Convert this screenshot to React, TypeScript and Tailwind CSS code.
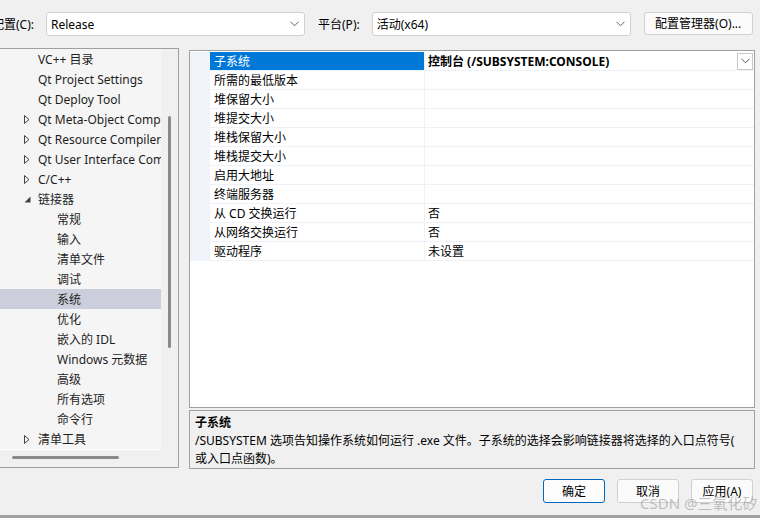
import React from "react";

const F = "font-['Noto_Sans','Noto_Sans_CJK_SC',sans-serif]";

function Chevron({ className = "" }: { className?: string }) {
  return (
    <svg width="9" height="6" viewBox="0 0 9 6" className={className}>
      <path d="M0.5 0.8 L4.5 4.8 L8.5 0.8" fill="none" stroke="#606060" strokeWidth="1" />
    </svg>
  );
}

function Combo({ text, w }: { text: string; w: string }) {
  return (
    <div className={`${w} h-[24px] bg-white border border-[#d0d0d0] rounded-[3px] flex items-center justify-between pl-[4px] pr-[5px]`}>
      <span className="text-[12px] text-black pt-[1px]">{text}</span>
      <Chevron />
    </div>
  );
}

type Tree = { label: string; level: 1 | 2; arrow?: "closed" | "open"; selected?: boolean };

const tree: Tree[] = [
  { label: "VC++ 目录", level: 1 },
  { label: "Qt Project Settings", level: 1 },
  { label: "Qt Deploy Tool", level: 1 },
  { label: "Qt Meta-Object Compiler", level: 1, arrow: "closed" },
  { label: "Qt Resource Compiler", level: 1, arrow: "closed" },
  { label: "Qt User Interface Compiler", level: 1, arrow: "closed" },
  { label: "C/C++", level: 1, arrow: "closed" },
  { label: "链接器", level: 1, arrow: "open" },
  { label: "常规", level: 2 },
  { label: "输入", level: 2 },
  { label: "清单文件", level: 2 },
  { label: "调试", level: 2 },
  { label: "系统", level: 2, selected: true },
  { label: "优化", level: 2 },
  { label: "嵌入的 IDL", level: 2 },
  { label: "Windows 元数据", level: 2 },
  { label: "高级", level: 2 },
  { label: "所有选项", level: 2 },
  { label: "命令行", level: 2 },
  { label: "清单工具", level: 1, arrow: "closed" },
];

function Arrow({ kind }: { kind: "closed" | "open" }) {
  if (kind === "closed")
    return (
      <svg width="6" height="9" viewBox="0 0 6 9" className="shrink-0">
        <path d="M0.5 0.5 L5 4.5 L0.5 8.5 Z" fill="none" stroke="#404040" strokeWidth="1" />
      </svg>
    );
  return (
    <svg width="7" height="7" viewBox="0 0 7 7" className="shrink-0">
      <path d="M6.5 0.5 L6.5 6.5 L0.5 6.5 Z" fill="#404040" />
    </svg>
  );
}

const props: { name: string; value: string; selected?: boolean }[] = [
  { name: "子系统", value: "控制台 (/SUBSYSTEM:CONSOLE)", selected: true },
  { name: "所需的最低版本", value: "" },
  { name: "堆保留大小", value: "" },
  { name: "堆提交大小", value: "" },
  { name: "堆栈保留大小", value: "" },
  { name: "堆栈提交大小", value: "" },
  { name: "启用大地址", value: "" },
  { name: "终端服务器", value: "" },
  { name: "从 CD 交换运行", value: "否" },
  { name: "从网络交换运行", value: "否" },
  { name: "驱动程序", value: "未设置" },
];

function Btn({ label, primary }: { label: string; primary?: boolean }) {
  return (
    <div
      className={`w-[62px] h-[24px] rounded-[3px] flex items-center justify-center text-[12px] text-black pt-[1px] ${
        primary ? "border border-[#0067c0] bg-[#fdfdfd]" : "border border-[#d0d0d0] bg-[#fbfbfb]"
      }`}
    >
      {label}
    </div>
  );
}

export default function App() {
  return (
    <div className={`${F} relative w-[760px] h-[518px] bg-[#f0f0f0] overflow-hidden flex flex-col text-black`}>
      {/* top bar */}
      <div className="h-[48px] flex items-start pt-[12px]">
        <span className="ml-[-8px] h-[24px] pt-[1px] flex items-center text-[12px] whitespace-nowrap">配置(C):</span>
        <div className="ml-[12px]">
          <Combo text="Release" w="w-[259px]" />
        </div>
        <span className="ml-[13px] h-[24px] pt-[1px] flex items-center text-[12px] whitespace-nowrap">平台(P):</span>
        <div className="ml-[12px]">
          <Combo text="活动(x64)" w="w-[259px]" />
        </div>
        <div className="ml-[13px] w-[109px] h-[23px] pt-[1px] bg-[#fbfbfb] border border-[#d0d0d0] rounded-[3px] flex items-center justify-center text-[12px] whitespace-nowrap">
          配置管理器(O)...
        </div>
      </div>

      {/* main */}
      <div className="flex items-start">
        {/* left tree panel */}
        <div className="w-[179px] h-[420px] border-t border-r border-b border-[#a0a0a0] flex flex-col">
          <div className="flex h-[401px]">
            <div className="w-[161px] bg-[#f5f5f5] overflow-hidden border-b border-white">
              {tree.map((t, i) => (
                <div
                  key={i}
                  className={`h-[20px] pt-[1px] flex items-center whitespace-nowrap text-[12px] ${
                    t.selected ? "bg-[#cccedb]" : ""
                  } ${t.level === 2 ? "pl-[57px]" : t.arrow ? "pl-[24px]" : "pl-[38px]"}`}
                >
                  {t.level === 1 && t.arrow && (
                    <span className="w-[14px] shrink-0 flex items-center">
                      <Arrow kind={t.arrow} />
                    </span>
                  )}
                  <span className="text-[#1e1e1e]">{t.label}</span>
                </div>
              ))}
            </div>
            <div className="flex-1 relative">
              <div className="absolute left-[7px] top-[67px] w-[3px] h-[232px] bg-[#8a8a8a] rounded-full" />
            </div>
          </div>
          <div className="flex-1 relative">
            <div className="absolute left-[12px] top-[6px] w-[107px] h-[3px] bg-[#8a8a8a] rounded-full" />
          </div>
        </div>

        {/* right column */}
        <div className="ml-[10px] mt-[2px] w-[566px] flex flex-col">
          <div className="h-[358px] bg-white border border-[#a0a0a0] flex flex-col">
            <div className="flex pt-[1px]">
              <div className="w-[20px] bg-[#f0f4fa]" />
              <div className="flex-1">
                {props.map((p, i) => (
                  <div key={i} className="h-[19px] flex border-b border-[#eef1f6] text-[12px]">
                    <div
                      className={`w-[215px] pl-[4px] pt-[1px] flex items-center border-r border-[#eef1f6] ${
                        p.selected ? "bg-[#0078d7] text-white" : ""
                      }`}
                    >
                      {p.name}
                    </div>
                    <div className="flex-1 flex items-center justify-between pl-[3px] pr-[1px]">
                      <span className={`pt-[1px] ${p.selected ? "font-bold" : ""}`}>{p.value}</span>
                      {p.selected && (
                        <div className="w-[16px] h-[17px] border border-[#c8c8c8] bg-white flex items-center justify-center">
                          <Chevron />
                        </div>
                      )}
                    </div>
                  </div>
                ))}
              </div>
            </div>
          </div>
          <div className="mt-[2px] h-[59px] border border-[#a0a0a0] bg-[#f0f0f0] px-[5px] pt-[3px] text-[12px] leading-[18px]">
            <div className="font-bold">子系统</div>
            <div className="whitespace-nowrap">
              /SUBSYSTEM 选项告知操作系统如何运行 .exe 文件。子系统的选择会影响链接器将选择的入口点符号(
            </div>
            <div>或入口点函数)。</div>
          </div>
        </div>
      </div>

      {/* buttons */}
      <div className="flex justify-end gap-[12px] pr-[7px] mt-[10px]">
        <Btn label="确定" primary />
        <Btn label="取消" />
        <Btn label="应用(A)" />
      </div>

      <div className="mt-auto h-[3px] bg-[#a0a0a0]" />

      {/* watermark */}
      <div className="absolute z-10 left-[640px] top-[494px] text-[15px] leading-[18px] text-[#9a9a9a]/60 whitespace-nowrap pointer-events-none">
        CSDN @三氧化矽
      </div>
    </div>
  );
}
